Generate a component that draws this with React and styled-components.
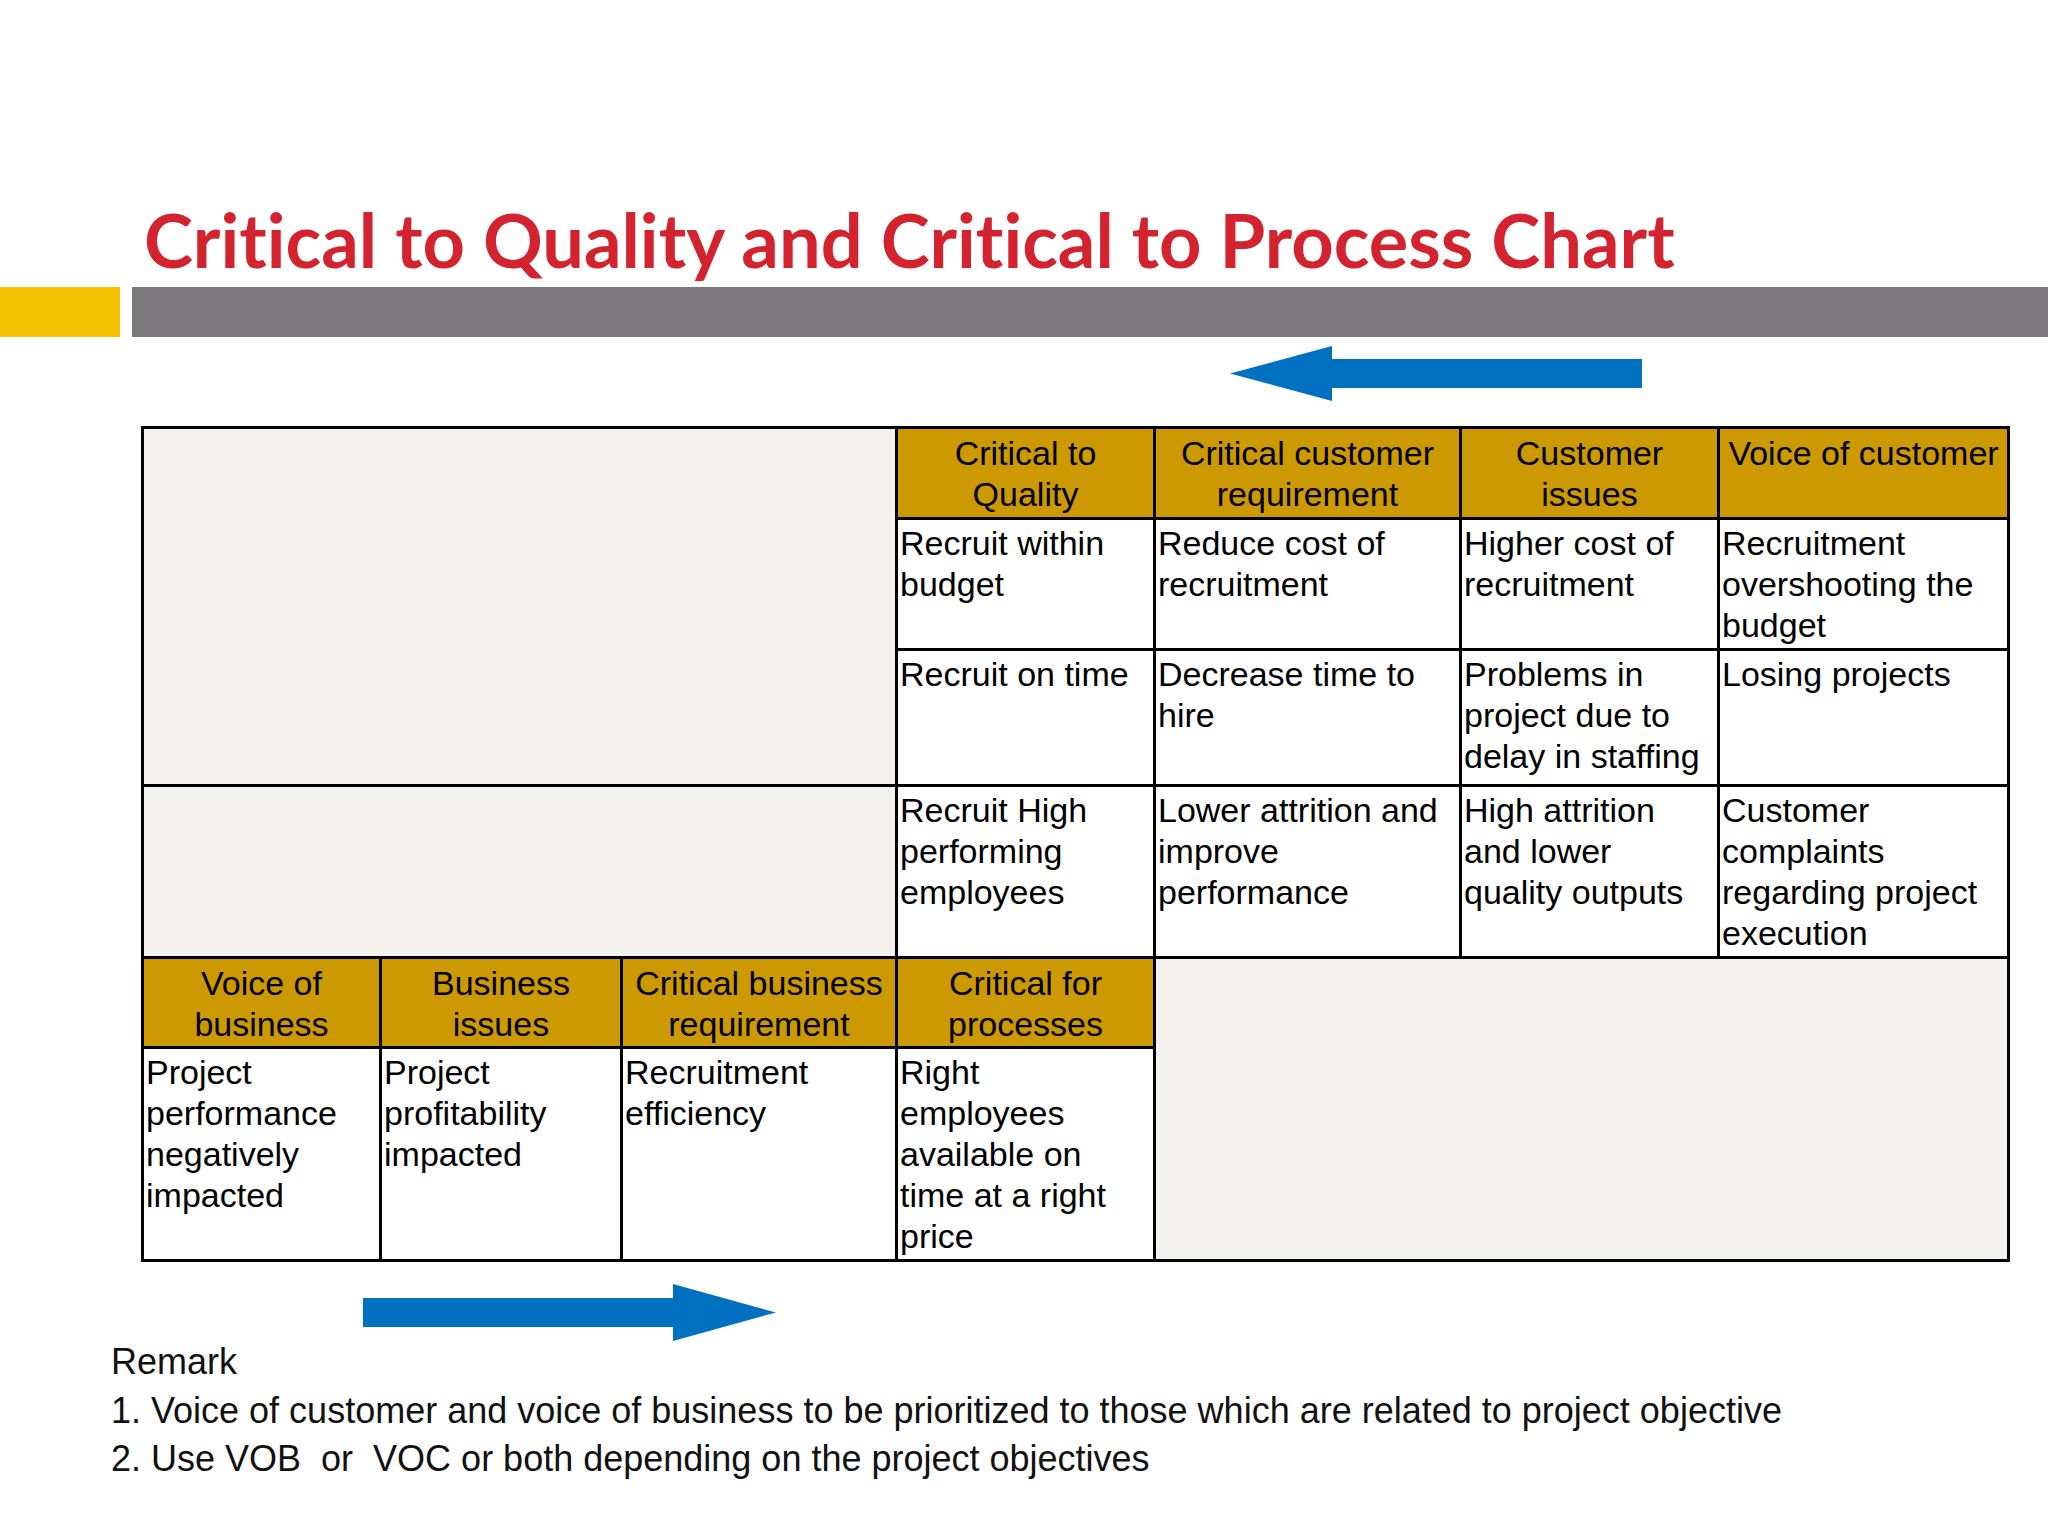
import React from "react";
import styled, { createGlobalStyle } from "styled-components";

const GlobalStyle = createGlobalStyle`
  html, body {
    margin: 0;
    padding: 0;
    background: #ffffff;
  }
  body {
    font-family: "Liberation Sans", Arial, sans-serif;
    color: #000;
  }
`;

const Slide = styled.div`
  width: 2048px;
  height: 1536px;
  overflow: hidden;
  display: flex;
  flex-direction: column;
  background: #ffffff;
`;

const Title = styled.h1`
  margin: 195px 0 0 144px;
  font-family: Lato, "Liberation Sans", sans-serif;
  font-weight: 700;
  font-size: 74px;
  line-height: 89px;
  color: #d3232e;
  white-space: nowrap;
  font-variant-ligatures: none;
`;

const Bars = styled.div`
  display: flex;
  gap: 12px;
  height: 50px;
  margin-top: 3px;
`;

const Bar = styled.div`
  flex: ${(p) => (p.$grow ? 1 : "0 0 120px")};
  background: ${(p) => p.$color};
`;

const ArrowRow = styled.div`
  display: flex;
  margin: ${(p) => p.$margin};
  svg {
    display: block;
  }
`;

const Chart = styled.div`
  margin: 25px 0 0 141px;
  width: max-content;
  display: grid;
  grid-template-columns: 235px 238px 272px 255px 303px 255px 287px;
  grid-template-rows: 88px 128px 133px 169px 87px 210px;
  gap: 3px;
  padding: 3px;
  background: #000;
`;

const cellBg = { head: "#cc9900", blank: "#f3f2ef", body: "#ffffff" };

const Cell = styled.div`
  grid-column: ${(p) => p.$col};
  grid-row: ${(p) => p.$row};
  background: ${(p) => cellBg[p.$kind]};
  text-align: ${(p) => (p.$kind === "head" ? "center" : "left")};
  padding: ${(p) => (p.$kind === "head" ? "4px 3px 0" : "3px 2px 0")};
  font-size: 34px;
  line-height: 41px;
  color: #000;
  overflow: hidden;
`;

const Remarks = styled.div`
  margin: -3px 0 0 111px;
  font-family: "Liberation Sans", Arial, sans-serif;
  font-size: 36px;
  line-height: 48.5px;
  color: #111;
`;

const customerHead = [
  "Critical to Quality",
  "Critical customer requirement",
  "Customer issues",
  "Voice of customer",
];

const customerRows = [
  [
    "Recruit within budget",
    "Reduce cost of recruitment",
    "Higher cost of recruitment",
    "Recruitment overshooting the budget",
  ],
  [
    "Recruit on time",
    "Decrease time to hire",
    "Problems in project due to delay in staffing",
    "Losing projects",
  ],
  [
    "Recruit High performing employees",
    "Lower attrition and improve performance",
    "High attrition and lower quality outputs",
    "Customer complaints regarding project execution",
  ],
];

const businessHead = [
  "Voice of business",
  "Business issues",
  "Critical business requirement",
  "Critical for processes",
];

const businessRow = [
  "Project performance negatively impacted",
  "Project profitability impacted",
  "Recruitment efficiency",
  "Right employees available on time at a right price",
];

const LeftArrow = () => (
  <svg width="412" height="55" viewBox="0 0 412 55">
    <polygon
      points="0,27.5 102,0 102,13 412,13 412,42 102,42 102,55"
      fill="#0070c0"
    />
  </svg>
);

const RightArrow = () => (
  <svg width="413" height="57" viewBox="0 0 413 57">
    <polygon
      points="0,14 310,14 310,0 413,28.5 310,57 310,43 0,43"
      fill="#0070c0"
    />
  </svg>
);

export default function App() {
  return (
    <>
      <GlobalStyle />
      <Slide>
        <Title>Critical to Quality and Critical to Process Chart</Title>
        <Bars>
          <Bar $color="#f5c100" />
          <Bar $grow $color="#7b797b" />
        </Bars>

        <ArrowRow $margin="9px 0 0 1230px">
          <LeftArrow />
        </ArrowRow>

        <Chart>
          {/* empty corners */}
          <Cell $kind="blank" $col="1 / 4" $row="1 / 4" />
          <Cell $kind="blank" $col="1 / 4" $row="4" />
          <Cell $kind="blank" $col="5 / 8" $row="5 / 7" />

          {/* voice of customer side */}
          {customerHead.map((t, i) => (
            <Cell key={t} $kind="head" $col={i + 4} $row={1}>
              {t}
            </Cell>
          ))}
          {customerRows.map((row, r) =>
            row.map((t, i) => (
              <Cell key={t} $kind="body" $col={i + 4} $row={r + 2}>
                {t}
              </Cell>
            ))
          )}

          {/* voice of business side */}
          {businessHead.map((t, i) => (
            <Cell key={t} $kind="head" $col={i + 1} $row={5}>
              {t}
            </Cell>
          ))}
          {businessRow.map((t, i) => (
            <Cell key={t} $kind="body" $col={i + 1} $row={6}>
              {t}
            </Cell>
          ))}
        </Chart>

        <ArrowRow $margin="22px 0 0 363px">
          <RightArrow />
        </ArrowRow>

        <Remarks>
          <div>Remark</div>
          <div>
            1. Voice of customer and voice of business to be prioritized to
            those which are related to project objective
          </div>
          <div>2. Use VOB &nbsp;or &nbsp;VOC or both depending on the project objectives</div>
        </Remarks>
      </Slide>
    </>
  );
}
